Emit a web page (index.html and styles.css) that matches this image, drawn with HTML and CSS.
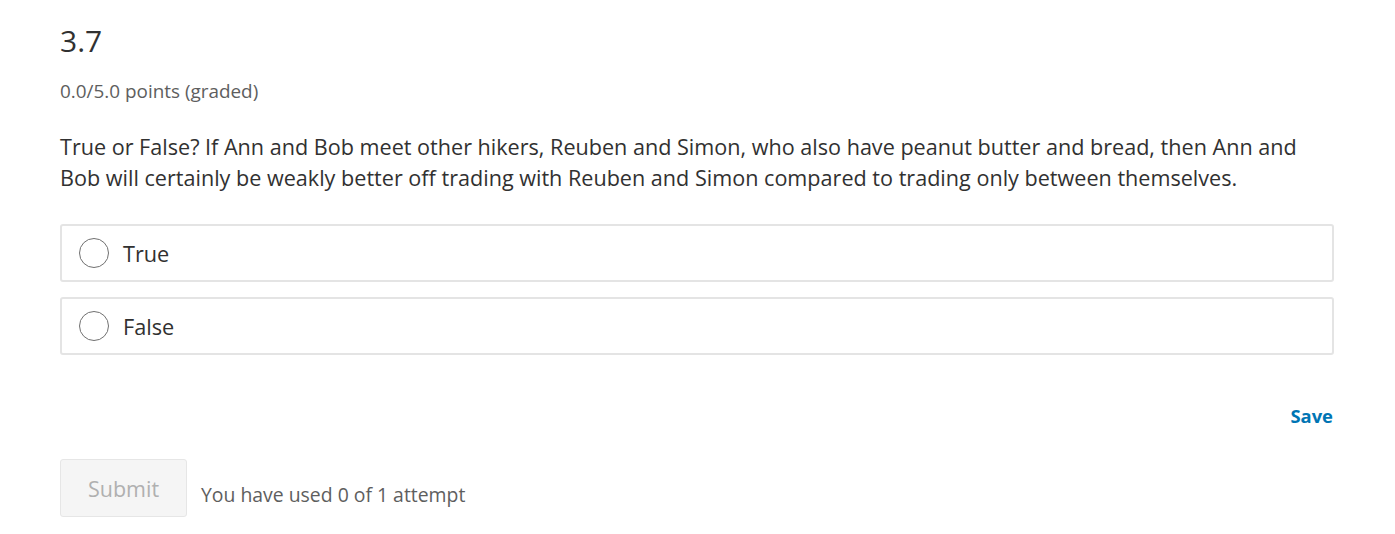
FILE: index.html
```html
<!DOCTYPE html>
<html>
<head>
<meta charset="utf-8">
<link rel="stylesheet" href="styles.css">
</head>
<body>
<div class="problem">
  <h3 class="title">3.7</h3>
  <div class="points">0.0/5.0 points (graded)</div>
  <p class="question">True or False? If Ann and Bob meet other hikers, Reuben and Simon, who also have peanut butter and bread, then Ann and Bob will certainly be weakly better off trading with Reuben and Simon compared to trading only between themselves.</p>
  <div class="choices">
    <label class="choice"><span class="radio"></span><span class="label">True</span></label>
    <label class="choice"><span class="radio"></span><span class="label">False</span></label>
  </div>
  <div class="save-row"><span class="save">Save</span></div>
  <div class="submit-row">
    <span class="submit">Submit</span>
    <span class="attempts">You have used 0 of 1 attempt</span>
  </div>
</div>
</body>
</html>
```
FILE: styles.css
```css
html, body {
  margin: 0;
  padding: 0;
  background: #fff;
}
body {
  font-family: "Open Sans", "Noto Sans", sans-serif;
  color: #313131;
}
.problem {
  width: 1274px;
  padding: 20px 0 0 60px;
}
.title {
  margin: 0;
  font-size: 30px;
  font-weight: 400;
  line-height: 42px;
  color: #313131;
}
.points {
  margin-top: 17px;
  font-size: 18.9px;
  line-height: 24px;
  color: #5e5e5e;
}
.question {
  margin: 28px 0 0;
  font-size: 21.6px;
  line-height: 31px;
  color: #313131;
}
.choices {
  margin-top: 31px;
  display: flex;
  flex-direction: column;
  gap: 15px;
}
.choice {
  display: flex;
  align-items: center;
  height: 54px;
  border: 2px solid #e4e4e4;
  border-radius: 3px;
  padding-left: 17px;
}
.radio {
  width: 30px;
  height: 30px;
  border: 1.5px solid #707070;
  border-radius: 50%;
  box-sizing: border-box;
}
.label {
  margin-left: 14px;
  font-size: 21.7px;
  color: #313131;
}
.save-row {
  display: flex;
  justify-content: flex-end;
  margin-top: 49px;
}
.save {
  font-size: 18.4px;
  font-weight: 700;
  color: #0075b4;
  line-height: 24px;
  padding-right: 1px;
}
.submit-row {
  display: flex;
  align-items: flex-end;
  margin-top: 31px;
}
.submit {
  display: flex;
  align-items: center;
  justify-content: center;
  width: 125px;
  height: 56px;
  border: 1px solid #e6e6e6;
  border-radius: 3px;
  background: #f5f5f5;
  color: #b0b0b0;
  font-size: 21.5px;
}
.attempts {
  margin-left: 14px;
  font-size: 19.4px;
  line-height: 24px;
  color: #5e5e5e;
  padding-bottom: 10px;
}
```
